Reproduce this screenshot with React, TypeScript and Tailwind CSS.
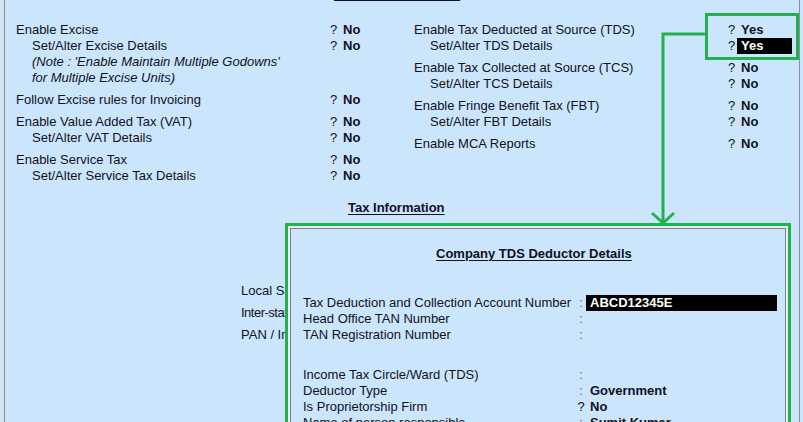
import React from "react";

const green = "border-[#22b14c]";

type Row = { label: string; value: string; indent?: boolean; hi?: boolean };

function FeatureRow({ label, value, indent, hi, valueW }: Row & { valueW: string }) {
  return (
    <div className="flex h-[16px]">
      <div className={`w-[314px] ${indent ? "pl-[16px]" : ""}`}>{label}</div>
      <div className="w-[9px]">?</div>
      <div
        className={`${valueW} pl-[4px] font-bold ${hi ? "bg-black text-white" : ""}`}
      >
        {value}
      </div>
    </div>
  );
}

function Field({
  label,
  sep = ":",
  value,
  hi,
}: {
  label: string;
  sep?: string;
  value?: string;
  hi?: boolean;
}) {
  return (
    <div className="flex h-[16px]">
      <div className="w-[273px]">{label}</div>
      <div className={`w-[10px] text-center ${sep === ":" ? "text-[#666]" : ""}`}>
        {sep}
      </div>
      <div
        className={`w-[191px] pl-[4px] font-bold ${hi ? "bg-black text-white" : ""}`}
      >
        {value}
      </div>
    </div>
  );
}

export default function App() {
  return (
    <div
      className="relative flex h-[422px] w-[803px] overflow-hidden bg-[#cbe5fc] text-[13px] leading-[16px] text-[#111122]"
      style={{ fontFamily: '"Liberation Sans", Arial, sans-serif' }}
    >
      <div className="w-[4px] bg-[#d4e3ef]" />
      <div className="w-[796px] border-x border-[#8c9096]">
        <div className="-mt-[15px] h-[16px] pl-[329px] font-bold">
          <span className="underline decoration-1 underline-offset-[3px]">
            Statutory &amp; Taxation
          </span>
        </div>

        <div className="mt-[21px] flex">
          {/* left column */}
          <div className="pl-[11px]">
            <FeatureRow label="Enable Excise" value="No" valueW="w-[50px]" />
            <FeatureRow label="Set/Alter Excise Details" value="No" indent valueW="w-[50px]" />
            <div className="pl-[16px] italic">
              <div>(Note : 'Enable Maintain Multiple Godowns'</div>
              <div>for Multiple Excise Units)</div>
            </div>
            <div className="mt-[6px]">
              <FeatureRow label="Follow Excise rules for Invoicing" value="No" valueW="w-[50px]" />
            </div>
            <div className="mt-[6px]">
              <FeatureRow label="Enable Value Added Tax (VAT)" value="No" valueW="w-[50px]" />
              <FeatureRow label="Set/Alter VAT Details" value="No" indent valueW="w-[50px]" />
            </div>
            <div className="mt-[6px]">
              <FeatureRow label="Enable Service Tax" value="No" valueW="w-[50px]" />
              <FeatureRow label="Set/Alter Service Tax Details" value="No" indent valueW="w-[50px]" />
            </div>
          </div>

          {/* right column */}
          <div className="ml-[25px]">
            <FeatureRow label="Enable Tax Deducted at Source (TDS)" value="Yes" valueW="w-[55px]" />
            <FeatureRow label="Set/Alter TDS Details" value="Yes" indent hi valueW="w-[55px]" />
            <div className="mt-[6px]">
              <FeatureRow label="Enable Tax Collected at Source (TCS)" value="No" valueW="w-[55px]" />
              <FeatureRow label="Set/Alter TCS Details" value="No" indent valueW="w-[55px]" />
            </div>
            <div className="mt-[6px]">
              <FeatureRow label="Enable Fringe Benefit Tax (FBT)" value="No" valueW="w-[55px]" />
              <FeatureRow label="Set/Alter FBT Details" value="No" indent valueW="w-[55px]" />
            </div>
            <div className="mt-[6px]">
              <FeatureRow label="Enable MCA Reports" value="No" valueW="w-[55px]" />
            </div>
          </div>
        </div>

        <div className="mt-[16px] h-[16px] pl-[343px] font-bold">
          <span className="underline decoration-1 underline-offset-[2px]">Tax Information</span>
        </div>

        <div className="mt-[67px] flex flex-col gap-[6px] pl-[236px]">
          <div>Local Sales Tax Number</div>
          <div className="tracking-[-0.5px]">Inter-state Sales Tax Number</div>
          <div>PAN / Income-tax No.</div>
        </div>
      </div>
      <div className="w-[2px]" />

      {/* TDS deductor popup */}
      <div className={`absolute left-[285px] top-[223px] h-[230px] w-[506px] border-[3px] ${green} bg-[#e6eef6] p-[2px]`}>
        <div className="h-full border border-[#808080] bg-[#cbe5fc]">
          <div className="mt-[17px] h-[16px] pl-[145px] font-bold">
            <span className="underline decoration-1 underline-offset-[2px]">
              Company TDS Deductor Details
            </span>
          </div>
          <div className="mt-[33px] pl-[12px]">
            <Field label="Tax Deduction and Collection Account Number" value="ABCD12345E" hi />
            <Field label="Head Office TAN Number" />
            <Field label="TAN Registration Number" />
            <div className="mt-[24px]">
              <Field label="Income Tax Circle/Ward (TDS)" />
              <Field label="Deductor Type" value="Government" />
              <Field label="Is Proprietorship Firm" sep="?" value="No" />
              <Field label="Name of person responsible" value="Sumit Kumar" />
              <Field label="Son/Daughter of" />
            </div>
          </div>
        </div>
      </div>

      {/* annotation box around TDS values */}
      <div className={`absolute left-[705px] top-[13px] h-[47px] w-[94px] border-[3px] ${green}`} />

      {/* annotation arrow */}
      <svg
        className="pointer-events-none absolute left-0 top-0"
        width="803"
        height="422"
        viewBox="0 0 803 422"
        fill="none"
      >
        <polyline
          points="705,34 663,34 663,222"
          stroke="#22b14c"
          strokeWidth="3"
        />
        <polyline
          points="652,213 663,223 674,213"
          stroke="#22b14c"
          strokeWidth="3"
        />
      </svg>
    </div>
  );
}
